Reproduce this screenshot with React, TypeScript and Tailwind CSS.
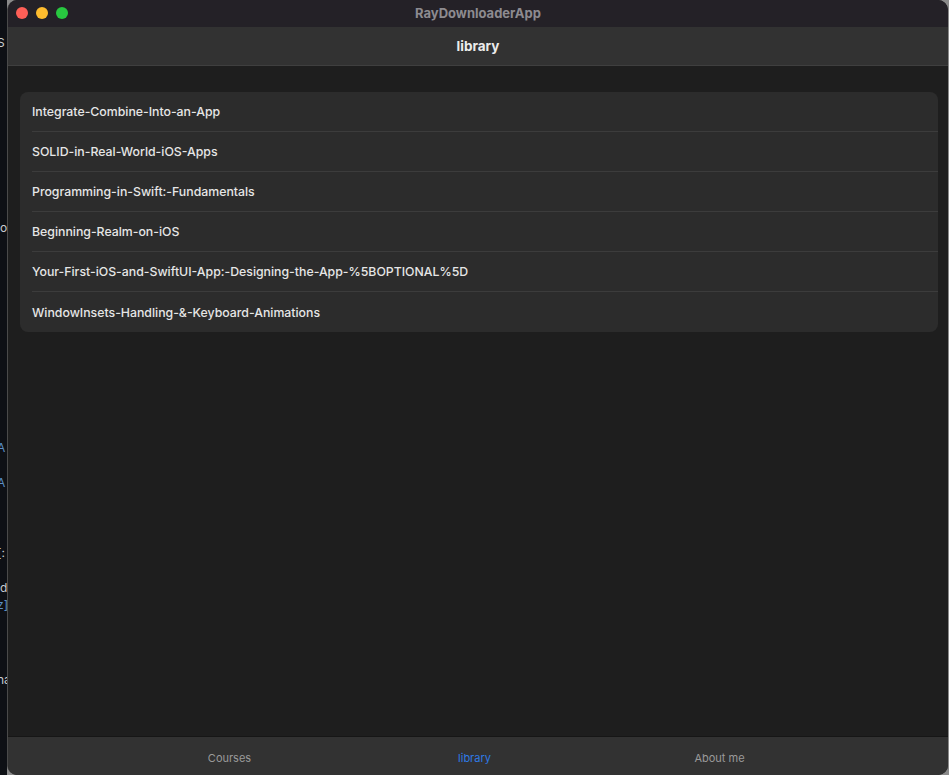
const courses = [
  'Integrate-Combine-Into-an-App',
  'SOLID-in-Real-World-iOS-Apps',
  'Programming-in-Swift:-Fundamentals',
  'Beginning-Realm-on-iOS',
  'Your-First-iOS-and-SwiftUI-App:-Designing-the-App-%5BOPTIONAL%5D',
  'WindowInsets-Handling-&-Keyboard-Animations',
];

const tabs = ['Courses', 'library', 'About me'];

// bits of the editor window peeking out behind the app window
const behind = [
  { text: 'S', top: 'mt-[36px]', color: 'text-[#c9ccd1]' },
  { text: 'lo', top: 'mt-[171px]', color: 'text-[#c9ccd1]' },
  { text: 'A', top: 'mt-[206px]', color: 'text-[#5b8fc7]' },
  { text: 'A', top: 'mt-[21px]', color: 'text-[#5b8fc7]' },
  { text: '[:', top: 'mt-[56px]', color: 'text-[#c9ccd1]' },
  { text: 'id', top: 'mt-[21px]', color: 'text-[#c9ccd1]' },
  { text: 'z]', top: 'mt-[3px]', color: 'text-[#5b8fc7]' },
  { text: 'na', top: 'mt-[61px]', color: 'text-[#c9ccd1]' },
];

export default function App() {
  return (
    <div
      className="flex h-[775px] w-[949px] overflow-hidden bg-[#8a8a8a]"
      style={{ fontFamily: 'Inter, "Noto Sans", sans-serif' }}
    >
      {/* Background window edge */}
      <div className="flex w-[7px] shrink-0 flex-col overflow-hidden bg-[#0e1015] text-[12px] leading-[14px]">
        {behind.map((b, i) => (
          <div key={i} className={`${b.top} ${b.color} -ml-[3px] whitespace-nowrap`}>
            {b.text}
          </div>
        ))}
      </div>

      {/* App window */}
      <div className="flex w-[941px] shrink-0 flex-col overflow-hidden rounded-[10px] border-l border-[#4a4a4a] bg-[#1e1e1e]">
        {/* Title bar */}
        <div className="relative flex h-[27px] shrink-0 items-center justify-center bg-[#242127]">
          <div className="absolute left-[8px] top-[7px] flex gap-[8px]">
            <span className="h-[12px] w-[12px] rounded-full bg-[#fe5f57]" />
            <span className="h-[12px] w-[12px] rounded-full bg-[#febc2e]" />
            <span className="h-[12px] w-[12px] rounded-full bg-[#28c840]" />
          </div>
          <span className="text-[13px] font-bold text-[#8d8b90]">RayDownloaderApp</span>
        </div>

        {/* Navigation bar */}
        <div className="flex h-[39px] shrink-0 items-center justify-center border-b border-[#3f3f3f] bg-[#323232]">
          <span className="text-[13.5px] font-bold text-[#ececec]">library</span>
        </div>

        {/* Content */}
        <div className="flex-1 pl-[12px] pr-[10px] pt-[26px]">
          <div className="overflow-hidden rounded-[8px] bg-[#2c2c2c]">
            {courses.map((c, i) => (
              <div key={c} className="pl-[12px]">
                <div
                  className={`flex h-[40px] items-center pt-[2px] text-[12.3px] font-medium text-[#e6e6e6] ${
                    i < courses.length - 1 ? 'border-b border-[#3c3c3c]' : ''
                  }`}
                >
                  {c}
                </div>
              </div>
            ))}
          </div>
        </div>

        {/* Tab bar */}
        <div className="flex h-[39px] shrink-0 items-center justify-center border-t border-[#161616] bg-[#323232] pr-[7px] pt-[4px]">
          {tabs.map((t) => (
            <div
              key={t}
              className={`w-[245px] text-center text-[11px] ${
                t === 'library' ? 'text-[#2f7ae5]' : 'text-[#9a9a9a]'
              }`}
            >
              {t}
            </div>
          ))}
        </div>
      </div>
    </div>
  );
}
